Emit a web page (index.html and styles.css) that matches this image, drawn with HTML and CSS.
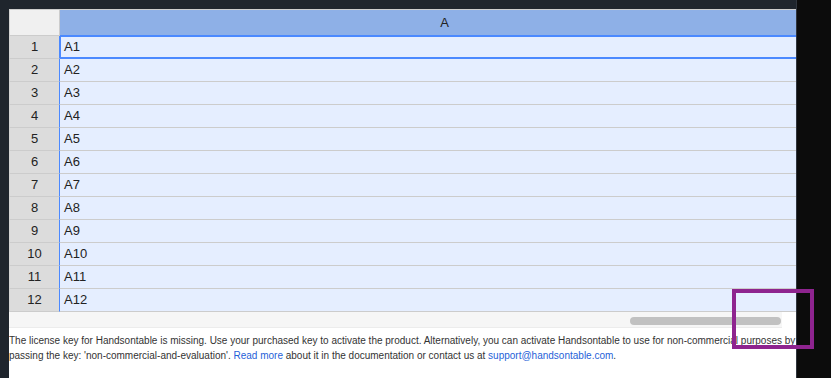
FILE: index.html
```html
<!DOCTYPE html>
<html>
<head>
<meta charset="utf-8">
<link rel="stylesheet" href="styles.css">
</head>
<body>
<div class="page">
  <div class="left">
    <div class="sheet">
      <div class="grid-wrap">
        <table class="grid">
          <colgroup><col class="c-rh"><col class="c-a"></colgroup>
          <thead>
            <tr><th class="corner"></th><th class="colh">A</th></tr>
          </thead>
          <tbody>
            <tr><th class="rowh">1</th><td class="cur">A1</td></tr>
            <tr><th class="rowh">2</th><td>A2</td></tr>
            <tr><th class="rowh">3</th><td>A3</td></tr>
            <tr><th class="rowh">4</th><td>A4</td></tr>
            <tr><th class="rowh">5</th><td>A5</td></tr>
            <tr><th class="rowh">6</th><td>A6</td></tr>
            <tr><th class="rowh">7</th><td>A7</td></tr>
            <tr><th class="rowh">8</th><td>A8</td></tr>
            <tr><th class="rowh">9</th><td>A9</td></tr>
            <tr><th class="rowh">10</th><td>A10</td></tr>
            <tr><th class="rowh">11</th><td>A11</td></tr>
            <tr><th class="rowh">12</th><td>A12</td></tr>
          </tbody>
        </table>
      </div>
      <div class="hscroll"><div class="thumb"></div></div>
      <p class="license">The license key for Handsontable is missing. Use your purchased key to activate the product. Alternatively, you can activate Handsontable to use for non-commercial purposes by passing the key: 'non-commercial-and-evaluation'. <a href="#">Read more</a> about it in the documentation or contact us at <a href="#">support@handsontable.com</a>.</p>
    </div>
  </div>
  <div class="right"></div>
  <div class="mark"></div>
</div>
</body>
</html>
```
FILE: styles.css
```css
html, body {
  margin: 0;
  padding: 0;
  height: 100%;
}
body {
  background: #1f252d;
  font-family: "Liberation Sans", Arial, sans-serif;
  overflow: hidden;
}
.page {
  position: relative;
  display: flex;
  height: 378px;
  width: 831px;
}
.left {
  width: 787px;
  padding: 9px 0 0 9px;
  flex: none;
}
.sheet {
  background: #fff;
  height: 369px;
  width: 787px;
  overflow: hidden;
}
.right {
  flex: 1;
  background: #0c0c0c;
  border-left: 1px solid #30353d;
}
.grid-wrap {
  width: 787px;
  overflow: hidden;
}
.grid {
  table-layout: fixed;
  border-collapse: separate;
  border-spacing: 0;
  width: 820px;
  font-size: 13px;
  color: #222;
}
.c-rh { width: 51px; }
.c-a { width: 769px; }
.grid th, .grid td {
  padding: 0;
  height: 22px;
  line-height: 22px;
  border-bottom: 1px solid #ccc;
  font-weight: normal;
  white-space: nowrap;
  overflow: hidden;
}
.corner {
  background: #f0f0f0;
  border-top: 1px solid #ccc;
  border-left: 1px solid #d4d4d4;
  border-right: 1px solid #ccc;
  height: 25px !important;
}
.colh {
  background: #8eb0e7;
  border-top: 1px solid #ccc;
  height: 25px !important;
  line-height: 25px !important;
  text-align: center;
  color: #222;
  border-bottom: 1px solid #4b89ff !important;
}
.rowh {
  background: #dcdcdc;
  border-left: 1px solid #d4d4d4;
  border-right: 1px solid #4b89ff;
  text-align: center;
}
.grid td {
  background: #e5eeff;
  padding: 0 4px;
}
.grid td.cur {
  border-bottom-color: #4b89ff;
  box-shadow: inset 1px 1px 0 #4b89ff, inset 0 -1px 0 #4b89ff;
}
.hscroll {
  width: 773px;
  height: 15px;
  background: #f6f6f6;
  border-bottom: 1px solid #ececec;
  display: flex;
  align-items: flex-end;
  padding-bottom: 0;
}
.thumb {
  margin-left: 621px;
  margin-bottom: 2px;
  width: 151px;
  height: 8px;
  border-radius: 4px;
  background: #c1c1c1;
}
.license {
  margin: 5px 0 0 0;
  font-size: 10px;
  line-height: 15px;
  color: #333;
}
.license a {
  color: #1f5fd8;
  text-decoration: none;
}
.mark {
  position: absolute;
  left: 732px;
  top: 289px;
  width: 74px;
  height: 52px;
  border: 4.5px solid #8e248f;
}
```
